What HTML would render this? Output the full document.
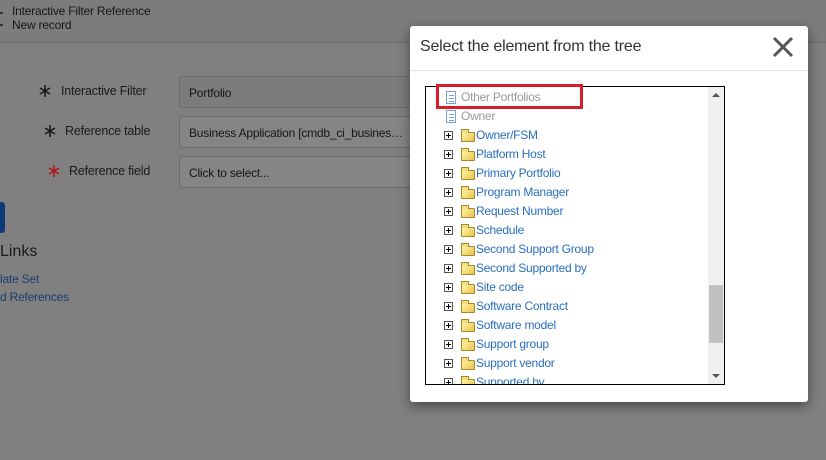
<!DOCTYPE html>
<html><head><meta charset="utf-8"><style>
*{margin:0;padding:0;box-sizing:border-box}
html,body{background:#808080}
body{width:826px;height:460px;overflow:hidden;font-family:"Liberation Sans",sans-serif;position:relative}
.wrap{position:absolute;left:0;top:0;width:826px;height:460px;background:#808080}
.hdr{position:absolute;left:0;top:0;width:826px;height:43px;background:#7c7c7c;border-bottom:1px solid #6c6c6c}
.t1{position:absolute;left:12px;top:4px;font-size:12px;color:#161616;letter-spacing:-.2px}
.t2{position:absolute;left:12px;top:18px;font-size:12px;color:#161616;letter-spacing:-.2px}
.lbl{position:absolute;font-size:12.5px;color:#1a1a1a;letter-spacing:-.2px}
.ast{position:absolute}
.inp{position:absolute;left:179px;width:240px;height:32px;border:1px solid #6c6c6c;border-radius:3px;background:#858585;font-size:12px;color:#161616;padding:9px 9px;white-space:nowrap;overflow:hidden;letter-spacing:-.2px}
.modal{position:absolute;left:410px;top:26px;width:398px;height:376px;background:#fff;border-radius:3px;box-shadow:0 4px 12px rgba(0,0,0,.45)}
.mh{height:45px;border-bottom:1px solid #e5e5e5;position:relative}
.mt{position:absolute;left:10px;top:12px;font-size:16px;color:#333;letter-spacing:-.2px}
.x{position:absolute;right:14px;top:10px}
.tree{position:absolute;left:15px;top:60px;width:300px;height:299px;border:1px solid #000;overflow:hidden}
.sb{position:absolute;right:0;top:0;width:16px;height:100%;background:#f0f0f0}
.th{position:absolute;left:1px;top:198px;width:14px;height:58px;background:#c1c1c1}
.row{position:absolute;left:0;height:19px;font-size:12px;line-height:19px;white-space:nowrap;letter-spacing:-.25px}
.pl{position:absolute;left:18px;top:5px;width:9px;height:9px;border:1px solid #555;background:#fff}
.pl:before{content:"";position:absolute;left:1px;top:3px;width:5px;height:1px;background:#000}
.pl:after{content:"";position:absolute;left:3px;top:1px;width:1px;height:5px;background:#000}
.fd{position:absolute;left:35px;top:6px;width:14px;height:10px;background:linear-gradient(135deg,#fff3a8,#e8c44a);border:1px solid #a88a2a;border-radius:1px}
.fd:before{content:"";position:absolute;left:-1px;top:-4px;width:6px;height:3px;border:1px solid #a88a2a;border-bottom:none;background:#f4df80}
.nm{position:absolute;left:50px;color:#2a6fc0}
.doc{position:absolute;left:20px;top:3px;width:10px;height:13px;border:1px solid #7aa0d8;background:#fff}
.doc i{position:absolute;left:2px;width:5px;height:1px;background:#7aa0d8}
.gn{position:absolute;left:35px;color:#999}
</style></head><body><div class="wrap">
<div class="hdr"><div style="position:absolute;left:0;top:12px;width:3px;height:14px;border-top:2px solid #333;border-bottom:2px solid #333"></div><div class="t1">Interactive Filter Reference</div><div class="t2">New record</div></div>
<svg class="ast" style="left:38px;top:84px" width="14" height="14" viewBox="0 0 14 14"><path d="M7 1V13M2 4L12 10M12 4L2 10" stroke="#1a1a1a" stroke-width="1.6"/></svg><div class="lbl" style="left:61px;top:84px">Interactive Filter</div>
<svg class="ast" style="left:43px;top:124px" width="14" height="14" viewBox="0 0 14 14"><path d="M7 1V13M2 4L12 10M12 4L2 10" stroke="#1a1a1a" stroke-width="1.6"/></svg><div class="lbl" style="left:65px;top:124px">Reference table</div>
<svg class="ast" style="left:47px;top:164px" width="14" height="14" viewBox="0 0 14 14"><path d="M7 1V13M2 4L12 10M12 4L2 10" stroke="#b01818" stroke-width="1.6"/></svg><div class="lbl" style="left:69px;top:164px">Reference field</div>
<div class="inp" style="top:76px;background:#7c7c7c">Portfolio</div>
<div class="inp" style="top:116px">Business Application [cmdb_ci_busines…</div>
<div class="inp" style="top:156px">Click to select...</div>
<div style="position:absolute;left:0;top:202px;width:5px;height:31px;background:#0c3a78;border-radius:0 3px 3px 0"></div>
<div style="position:absolute;left:0;top:243px;font-size:16px;color:#1a1a1a">Links</div>
<div style="position:absolute;left:0;top:272px;font-size:12px;color:#1b3c6e;letter-spacing:-.2px">late Set</div>
<div style="position:absolute;left:0;top:290px;font-size:12px;color:#1b3c6e;letter-spacing:-.2px">d References</div>
<div class="modal">
<div class="mh"><div class="mt">Select the element from the tree</div>
<svg class="x" width="22" height="22" viewBox="0 0 22 22"><path d="M2 2L20 20M20 2L2 20" stroke="#555" stroke-width="3"/></svg></div>
<div class="tree">
<div class="sb"><div style="position:absolute;left:4px;top:6px;border:4px solid transparent;border-bottom:4px solid #555;border-top:none"></div><div class="th"></div><div style="position:absolute;left:4px;bottom:6px;border:4px solid transparent;border-top:4px solid #555;border-bottom:none"></div></div>
<div class="row" style="top:1px;width:280px"><div class="doc"><i style="top:3px"></i><i style="top:6px"></i><i style="top:9px"></i></div><span class="gn">Other Portfolios</span></div>
<div class="row" style="top:20px;width:280px"><div class="doc"><i style="top:3px"></i><i style="top:6px"></i><i style="top:9px"></i></div><span class="gn">Owner</span></div>
<div class="row" style="top:39px"><div class="pl"></div><div class="fd"></div><span class="nm">Owner/FSM</span></div>
<div class="row" style="top:58px"><div class="pl"></div><div class="fd"></div><span class="nm">Platform Host</span></div>
<div class="row" style="top:77px"><div class="pl"></div><div class="fd"></div><span class="nm">Primary Portfolio</span></div>
<div class="row" style="top:96px"><div class="pl"></div><div class="fd"></div><span class="nm">Program Manager</span></div>
<div class="row" style="top:115px"><div class="pl"></div><div class="fd"></div><span class="nm">Request Number</span></div>
<div class="row" style="top:134px"><div class="pl"></div><div class="fd"></div><span class="nm">Schedule</span></div>
<div class="row" style="top:153px"><div class="pl"></div><div class="fd"></div><span class="nm">Second Support Group</span></div>
<div class="row" style="top:172px"><div class="pl"></div><div class="fd"></div><span class="nm">Second Supported by</span></div>
<div class="row" style="top:191px"><div class="pl"></div><div class="fd"></div><span class="nm">Site code</span></div>
<div class="row" style="top:210px"><div class="pl"></div><div class="fd"></div><span class="nm">Software Contract</span></div>
<div class="row" style="top:229px"><div class="pl"></div><div class="fd"></div><span class="nm">Software model</span></div>
<div class="row" style="top:248px"><div class="pl"></div><div class="fd"></div><span class="nm">Support group</span></div>
<div class="row" style="top:267px"><div class="pl"></div><div class="fd"></div><span class="nm">Support vendor</span></div>
<div class="row" style="top:286px"><div class="pl"></div><div class="fd"></div><span class="nm">Supported by</span></div>
</div>
<div style="position:absolute;left:26px;top:58px;width:147px;height:25px;border:3px solid #d81e2a"></div>
</div>
</div></body></html>
